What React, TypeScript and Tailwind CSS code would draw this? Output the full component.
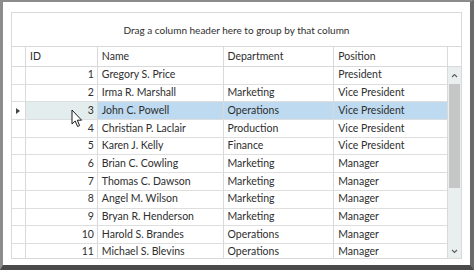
import React from "react";

type Row = { id: number; name: string; department: string; position: string };

const rows: Row[] = [
  { id: 1, name: "Gregory S. Price", department: "", position: "President" },
  { id: 2, name: "Irma R. Marshall", department: "Marketing", position: "Vice President" },
  { id: 3, name: "John C. Powell", department: "Operations", position: "Vice President" },
  { id: 4, name: "Christian P. Laclair", department: "Production", position: "Vice President" },
  { id: 5, name: "Karen J. Kelly", department: "Finance", position: "Vice President" },
  { id: 6, name: "Brian C. Cowling", department: "Marketing", position: "Manager" },
  { id: 7, name: "Thomas C. Dawson", department: "Marketing", position: "Manager" },
  { id: 8, name: "Angel M. Wilson", department: "Marketing", position: "Manager" },
  { id: 9, name: "Bryan R. Henderson", department: "Marketing", position: "Manager" },
  { id: 10, name: "Harold S. Brandes", department: "Operations", position: "Manager" },
  { id: 11, name: "Michael S. Blevins", department: "Operations", position: "Manager" },
];

const SELECTED = 3;

function Cursor() {
  return (
    <svg className="pointer-events-none absolute left-[68px] top-[107px]" width="12" height="19" viewBox="0 0 12 19">
      <path
        d="M1 1 L1 15 L4.2 12 L6.6 17.5 L8.6 16.6 L6.3 11.2 L10.6 11.2 Z"
        fill="#ffffff"
        stroke="#1a1a1a"
        strokeWidth="1"
        strokeLinejoin="round"
      />
    </svg>
  );
}

export default function App() {
  return (
    <div
      className="relative h-[270px] w-[474px] border-b-[5px] border-l-[3px] border-r-[4px] border-t-[2px] border-b-[#4a4a4a] border-l-[#8c8c8c] border-r-[#6a6a6a] border-t-[#8c8c8c] bg-white pb-[6px] pl-[8px] pr-[8px] pt-[10px] text-[#2e2e2e]"
      style={{ fontFamily: 'Lato, "Open Sans", sans-serif' }}
    >
      <div className="flex h-full flex-col border border-[#d9d9d9] text-[10.5px]">
        <div className="flex h-[34px] shrink-0 items-center justify-center border-b border-[#d9d9d9] pt-[2px] text-[10px]">
          Drag a column header here to group by that column
        </div>
        <div className="flex h-[20px] shrink-0 border-b border-[#d9d9d9]">
          <div className="w-[14px] border-r border-[#d9d9d9]" />
          <div className="flex w-[72px] items-center border-r border-[#d9d9d9] pl-[4px]">ID</div>
          <div className="flex w-[126px] items-center border-r border-[#d9d9d9] pl-[4px]">Name</div>
          <div className="flex w-[111px] items-center border-r border-[#d9d9d9] pl-[4px]">Department</div>
          <div className="flex w-[114px] items-center border-r border-[#d9d9d9] pl-[4px]">Position</div>
          <div className="w-[13px]" />
        </div>
        <div className="flex min-h-0 flex-1">
          <div className="min-w-0 flex-1 overflow-hidden">
            {rows.map((r) => {
              const sel = r.id === SELECTED;
              return (
                <div key={r.id} className="flex h-[17.7px] border-b border-[#dedede]">
                  <div className="flex w-[14px] items-center justify-center border-r border-[#d9d9d9]">
                    {sel ? (
                      <svg width="4" height="6" viewBox="0 0 4 6">
                        <path d="M0 0 L4 3 L0 6 Z" fill="#444444" />
                      </svg>
                    ) : null}
                  </div>
                  <div
                    className={`flex w-[72px] items-center justify-end border-r border-[#d9d9d9] pr-[3px] ${sel ? "bg-[#e4eded]" : ""}`}
                  >
                    {r.id}
                  </div>
                  <div className={`flex w-[126px] items-center border-r border-[#d9d9d9] pl-[4px] ${sel ? "bg-[#bddaf0]" : ""}`}>
                    {r.name}
                  </div>
                  <div className={`flex w-[111px] items-center border-r border-[#d9d9d9] pl-[4px] ${sel ? "bg-[#bddaf0]" : ""}`}>
                    {r.department}
                  </div>
                  <div className={`flex w-[113px] items-center pl-[4px] ${sel ? "bg-[#bddaf0]" : ""}`}>{r.position}</div>
                </div>
              );
            })}
          </div>
          <div className="flex w-[14px] shrink-0 flex-col border-l border-[#d9d9d9] bg-[#e9eeee]">
            <div className="flex h-[17px] items-center justify-center">
              <svg width="7" height="5" viewBox="0 0 7 5">
                <path d="M1 4 L3.5 1.5 L6 4" fill="none" stroke="#606060" strokeWidth="1.2" />
              </svg>
            </div>
            <div className="mx-[1px] h-[104px] bg-[#c6c6c6]" />
            <div className="flex-1" />
            <div className="flex h-[14px] items-center justify-center">
              <svg width="7" height="5" viewBox="0 0 7 5">
                <path d="M1 1 L3.5 3.5 L6 1" fill="none" stroke="#606060" strokeWidth="1.2" />
              </svg>
            </div>
          </div>
        </div>
      </div>
      <Cursor />
    </div>
  );
}
